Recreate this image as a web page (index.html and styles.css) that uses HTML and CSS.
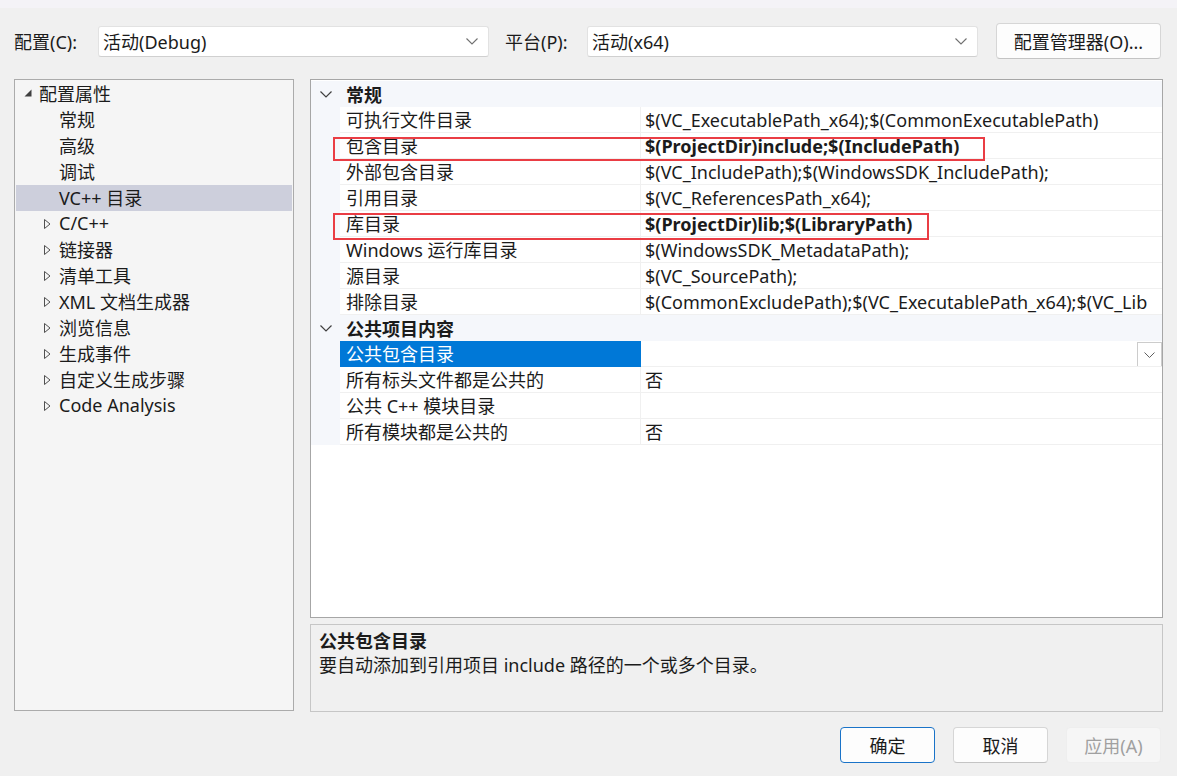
FILE: index.html
```html
<!DOCTYPE html>
<html lang="zh-CN">
<head>
<meta charset="utf-8">
<title>属性页</title>
<link rel="stylesheet" href="styles.css">
</head>
<body>
<div class="strip"></div>
<div class="topbar">
  <span class="lbl lbl-c">配置(C):</span>
  <div class="combo"><span class="combo-text">活动(Debug)</span><svg class="chev" width="12" height="7" viewBox="0 0 12 7"><polyline points="0.5,0.5 6,6 11.5,0.5" fill="none" stroke="#707070" stroke-width="1.1"/></svg></div>
  <span class="lbl lbl-p">平台(P):</span>
  <div class="combo"><span class="combo-text">活动(x64)</span><svg class="chev" width="12" height="7" viewBox="0 0 12 7"><polyline points="0.5,0.5 6,6 11.5,0.5" fill="none" stroke="#707070" stroke-width="1.1"/></svg></div>
  <button class="btn btn-mgr">配置管理器(O)...</button>
</div>

<div class="main">
  <div class="tree">
    <div class="titem lvl0"><svg class="tri-open" width="8" height="8" viewBox="0 0 8 8"><polygon points="7.5,0.5 7.5,7.5 0.5,7.5" fill="#404040"/></svg><span>配置属性</span></div>
    <div class="titem lvl1"><span>常规</span></div>
    <div class="titem lvl1"><span>高级</span></div>
    <div class="titem lvl1"><span>调试</span></div>
    <div class="titem lvl1 sel"><span>VC++ 目录</span></div>
    <div class="titem lvl1c"><svg class="tri" width="7" height="10" viewBox="0 0 7 10"><polygon points="0.5,0.5 6,5 0.5,9.5" fill="none" stroke="#505050" stroke-width="1"/></svg><span>C/C++</span></div>
    <div class="titem lvl1c"><svg class="tri" width="7" height="10" viewBox="0 0 7 10"><polygon points="0.5,0.5 6,5 0.5,9.5" fill="none" stroke="#505050" stroke-width="1"/></svg><span>链接器</span></div>
    <div class="titem lvl1c"><svg class="tri" width="7" height="10" viewBox="0 0 7 10"><polygon points="0.5,0.5 6,5 0.5,9.5" fill="none" stroke="#505050" stroke-width="1"/></svg><span>清单工具</span></div>
    <div class="titem lvl1c"><svg class="tri" width="7" height="10" viewBox="0 0 7 10"><polygon points="0.5,0.5 6,5 0.5,9.5" fill="none" stroke="#505050" stroke-width="1"/></svg><span>XML 文档生成器</span></div>
    <div class="titem lvl1c"><svg class="tri" width="7" height="10" viewBox="0 0 7 10"><polygon points="0.5,0.5 6,5 0.5,9.5" fill="none" stroke="#505050" stroke-width="1"/></svg><span>浏览信息</span></div>
    <div class="titem lvl1c"><svg class="tri" width="7" height="10" viewBox="0 0 7 10"><polygon points="0.5,0.5 6,5 0.5,9.5" fill="none" stroke="#505050" stroke-width="1"/></svg><span>生成事件</span></div>
    <div class="titem lvl1c"><svg class="tri" width="7" height="10" viewBox="0 0 7 10"><polygon points="0.5,0.5 6,5 0.5,9.5" fill="none" stroke="#505050" stroke-width="1"/></svg><span>自定义生成步骤</span></div>
    <div class="titem lvl1c"><svg class="tri" width="7" height="10" viewBox="0 0 7 10"><polygon points="0.5,0.5 6,5 0.5,9.5" fill="none" stroke="#505050" stroke-width="1"/></svg><span>Code Analysis</span></div>
  </div>

  <div class="rightcol">
    <div class="grid">
      <div class="grow head"><div class="gut"><svg width="12" height="7" viewBox="0 0 12 7"><polyline points="0.5,0.5 6,6 11.5,0.5" fill="none" stroke="#404040" stroke-width="1.2"/></svg></div><div class="hcell">常规</div></div>
      <div class="grow"><div class="gut"></div><div class="lcell">可执行文件目录</div><div class="vcell">$(VC_ExecutablePath_x64);$(CommonExecutablePath)</div></div>
      <div class="grow"><div class="gut"></div><div class="lcell">包含目录</div><div class="vcell bold">$(ProjectDir)include;$(IncludePath)</div></div>
      <div class="grow"><div class="gut"></div><div class="lcell">外部包含目录</div><div class="vcell">$(VC_IncludePath);$(WindowsSDK_IncludePath);</div></div>
      <div class="grow"><div class="gut"></div><div class="lcell">引用目录</div><div class="vcell">$(VC_ReferencesPath_x64);</div></div>
      <div class="grow"><div class="gut"></div><div class="lcell">库目录</div><div class="vcell bold">$(ProjectDir)lib;$(LibraryPath)</div></div>
      <div class="grow"><div class="gut"></div><div class="lcell">Windows 运行库目录</div><div class="vcell">$(WindowsSDK_MetadataPath);</div></div>
      <div class="grow"><div class="gut"></div><div class="lcell">源目录</div><div class="vcell">$(VC_SourcePath);</div></div>
      <div class="grow"><div class="gut"></div><div class="lcell">排除目录</div><div class="vcell">$(CommonExcludePath);$(VC_ExecutablePath_x64);$(VC_Lib</div></div>
      <div class="grow head"><div class="gut"><svg width="12" height="7" viewBox="0 0 12 7"><polyline points="0.5,0.5 6,6 11.5,0.5" fill="none" stroke="#404040" stroke-width="1.2"/></svg></div><div class="hcell">公共项目内容</div></div>
      <div class="grow"><div class="gut"></div><div class="lcell selcell">公共包含目录</div><div class="vcell dd-cell"><span class="ddbtn"><svg width="11" height="6" viewBox="0 0 11 6"><polyline points="0.5,0.5 5.5,5.5 10.5,0.5" fill="none" stroke="#606060" stroke-width="1"/></svg></span></div></div>
      <div class="grow"><div class="gut"></div><div class="lcell">所有标头文件都是公共的</div><div class="vcell">否</div></div>
      <div class="grow"><div class="gut"></div><div class="lcell">公共 C++ 模块目录</div><div class="vcell"></div></div>
      <div class="grow"><div class="gut"></div><div class="lcell">所有模块都是公共的</div><div class="vcell">否</div></div>
      <div class="mark mark1"></div>
      <div class="mark mark2"></div>
    </div>
    <div class="desc">
      <div class="desc-title">公共包含目录</div>
      <div class="desc-text">要自动添加到引用项目 include 路径的一个或多个目录。</div>
    </div>
  </div>
</div>

<div class="footer">
  <button class="btn btn-ok">确定</button>
  <button class="btn btn-cancel">取消</button>
  <button class="btn btn-apply" disabled>应用(A)</button>
</div>
</body>
</html>
```

FILE: styles.css
```css
* { box-sizing: border-box; }
html, body { margin: 0; padding: 0; }
body {
  width: 1177px;
  height: 776px;
  overflow: hidden;
  background: #f0f0f0;
  font-family: "Noto Sans", "Noto Sans CJK SC", sans-serif;
  font-size: 18px;
  color: #1b1b1b;
}
.strip { height: 8px; background: #f4f3f7; }

.topbar {
  display: flex;
  align-items: center;
  height: 36px;
  margin-top: 15px;
  padding-left: 14px;
}
.lbl { white-space: nowrap; }
.lbl-c { width: 84px; }
.lbl-p { width: 82px; margin-left: 16px; }
.combo {
  width: 391px;
  height: 31px;
  background: #fff;
  border: 1px solid #e2e2e2;
  border-bottom-color: #d0d0d0;
  border-radius: 3px;
  display: flex;
  align-items: center;
  justify-content: space-between;
  padding: 0 10px 0 4px;
}
.chev { display: block; }

.btn {
  font-family: inherit;
  font-size: 18px;
  color: #1b1b1b;
  background: #fdfdfd;
  border: 1px solid #d6d6d6;
  border-bottom-color: #c4c4c4;
  border-radius: 4px;
  padding: 0;
  height: 36px;
}
.btn-mgr { width: 165px; margin-left: 18px; }

.main {
  display: flex;
  margin-top: 20px;
  padding-left: 14px;
  gap: 16px;
}
.tree {
  width: 280px;
  height: 632px;
  background: #f5f5f5;
  border: 1px solid #ababab;
  padding: 1px;
}
.titem {
  height: 26px;
  display: flex;
  align-items: center;
  white-space: nowrap;
  padding-bottom: 3px;
}
.titem.lvl0 { padding-left: 9px; }
.titem.lvl0 .tri-open { margin-right: 7px; margin-left: -1px; margin-top: 1px; }
.titem.lvl1 { padding-left: 43px; }
.titem.lvl1c { padding-left: 28px; }
.titem.lvl1c .tri { margin-right: 8px; margin-top: 2px; }
.titem.sel { background: #cdcfdc; }

.rightcol {
  display: flex;
  flex-direction: column;
  gap: 6px;
}
.grid {
  position: relative;
  width: 853px;
  height: 539px;
  background: #fff;
  border: 1px solid #a6a6a6;
  padding-top: 1px;
  overflow: hidden;
}
.grow {
  display: grid;
  grid-template-columns: 29px 301px 1fr;
  height: 26px;
  line-height: 25px;
}
.gut { background: #f5f7fb; display: flex; align-items: center; justify-content: center; }
.grow.head { background: #f5f7fb; grid-template-columns: 29px 1fr; line-height: 26px; }
.hcell { font-weight: bold; padding-left: 6px; padding-top: 1px; }
.lcell {
  padding-left: 6px;
  padding-top: 1px;
  border-bottom: 1px solid #f0f0f0;
  border-right: 1px solid #f0f0f0;
  white-space: nowrap;
  overflow: hidden;
}
.vcell {
  padding-left: 4px;
  padding-top: 1px;
  border-bottom: 1px solid #f0f0f0;
  white-space: nowrap;
  overflow: hidden;
}
.bold { font-weight: bold; }
.selcell { background: #0078d7; color: #fff; border-color: #0078d7; }
.dd-cell { display: flex; justify-content: flex-end; align-items: flex-start; padding-top: 1px; }
.ddbtn {
  width: 25px;
  height: 25px;
  border: 1px solid #cccccc;
  background: #fff;
  display: flex;
  align-items: center;
  justify-content: center;
}
.mark {
  position: absolute;
  border: 2px solid #ea3d44;
}
.mark1 { left: 22px; top: 57px; width: 652px; height: 24px; }
.mark2 { left: 22px; top: 133px; width: 596px; height: 27px; }

.desc {
  width: 853px;
  height: 88px;
  background: #f0f0f0;
  border: 1px solid #c6c6c6;
  padding: 4px 0 0 8px;
  line-height: 24px;
}
.desc-title { font-weight: bold; }

.footer {
  display: flex;
  justify-content: flex-end;
  gap: 18px;
  padding-right: 16px;
  margin-top: 15px;
}
.footer .btn { width: 95px; }
.btn-ok { border: 1px solid #1a73c8; border-radius: 4px; background: #fdfdfd; }
.btn-apply { background: #f6f6f6; color: #a0a0a0; border-color: #eeeeee; }
```
